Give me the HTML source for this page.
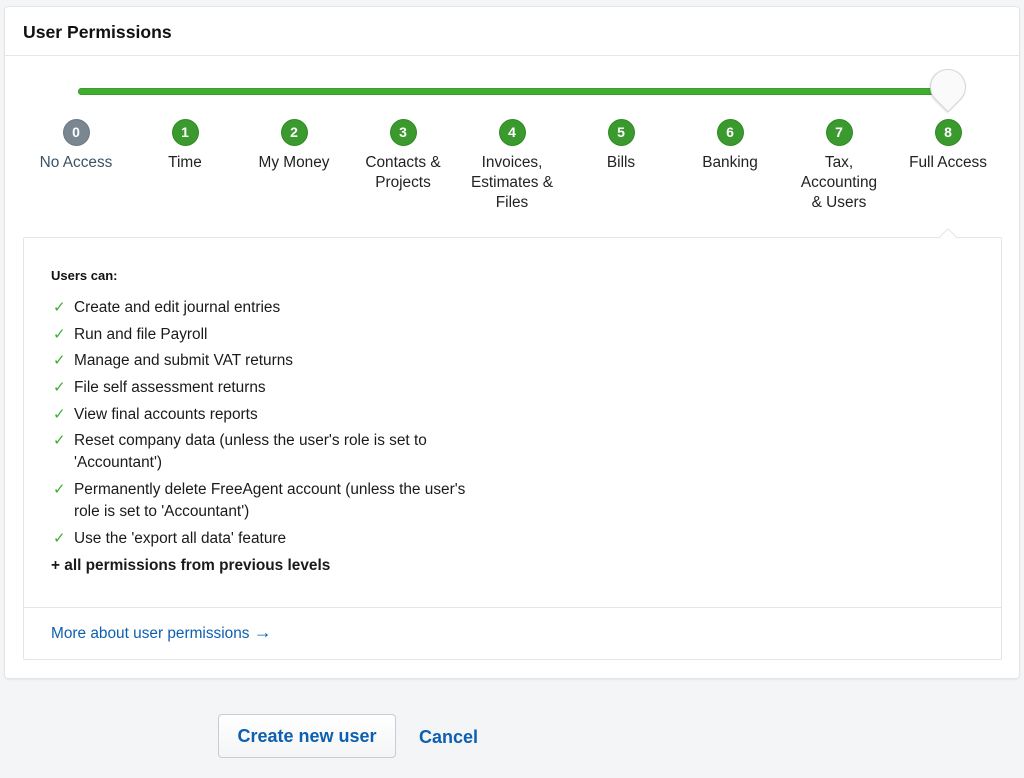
<!DOCTYPE html>
<html><head><meta charset="utf-8"><style>
*{box-sizing:border-box;margin:0;padding:0}
body{width:1024px;height:778px;background:#f4f5f7;font-family:"Liberation Sans",Arial,sans-serif;color:#1a1a1a;position:relative;overflow:hidden}
.card{position:absolute;left:5px;top:7px;width:1014px;height:671px;background:#fff;border-radius:3px;box-shadow:0 0 0 1px #e3e5e8,0 1px 2px rgba(0,0,0,.15)}
.hdr{position:absolute;left:0;top:0;width:100%;height:49px;border-bottom:1px solid #e6e7e9}
.hdr h1{position:absolute;left:18px;top:15px;font-size:17.6px;font-weight:bold;color:#111}
.track{position:absolute;left:73px;top:81px;width:872px;height:7px;border-radius:4px;background:#3fae2f;box-shadow:inset 0 0 0 1px #38a02a}
.knob{position:absolute;left:925px;top:62px;width:36px;height:36px;border-radius:50% 50% 0 50%;transform:rotate(45deg);background:#fafafa;border:1px solid #d3d5d8;box-shadow:0 1px 2px rgba(0,0,0,.12)}
.step{position:absolute;top:113px;width:110px;text-align:center;font-size:15.4px;line-height:20px;color:#222}
.step .n{display:block;margin:0 auto 8px;width:25px;height:25px;border-radius:50%;background:#3a9a2d;color:#fff;font-weight:bold;font-size:14px;line-height:25px;box-shadow:0 0 0 1px #2f8a24}
.step.z .n{background:#7a8791;box-shadow:0 0 0 1px #6c7882}
.step.z{color:#3c5366}
.box{position:absolute;left:18px;top:230px;width:979px;height:423px;border:1px solid #e3e5e8;border-radius:2px;background:#fff}
.ptr{position:absolute;left:936px;top:224px;width:14px;height:14px;background:#fff;border-left:1px solid #e3e5e8;border-top:1px solid #e3e5e8;transform:rotate(45deg)}
.uc{position:absolute;left:27px;top:30px;font-size:13px;font-weight:bold;color:#111}
ul{position:absolute;left:27px;top:59px;list-style:none;font-size:15.4px;line-height:22px}
li{position:relative;padding-left:23px;margin-bottom:4.7px}
li:before{content:"✓";position:absolute;left:2px;top:0;color:#3fae2f;font-size:15px}
.plus{font-weight:bold;padding-left:0}
.plus:before{content:none}
.foot{position:absolute;left:0;top:369px;width:100%;border-top:1px solid #e3e5e8}
.foot a{position:absolute;left:27px;top:17px;font-size:15.4px;color:#0d5fb0;text-decoration:none}
.foot a span{font-size:18px;line-height:15px}
.btn{position:absolute;left:218px;top:714px;width:178px;height:44px;border:1px solid #c9ccd0;border-radius:4px;background:linear-gradient(#fff,#f4f5f6);font-size:18px;font-weight:bold;color:#0d5fb0;text-align:center;line-height:43px}
.cancel{position:absolute;left:419px;top:727px;font-size:18px;font-weight:bold;color:#0d5fb0}
</style></head><body>
<div class="card">
<div class="hdr"><h1>User Permissions</h1></div>
<div class="track"></div>
<div class="knob"></div>
<div class="step z" style="left:16px"><span class="n">0</span>No Access</div>
<div class="step" style="left:125px"><span class="n">1</span>Time</div>
<div class="step" style="left:234px"><span class="n">2</span>My Money</div>
<div class="step" style="left:343px"><span class="n">3</span>Contacts &amp;<br>Projects</div>
<div class="step" style="left:452px"><span class="n">4</span>Invoices,<br>Estimates &amp;<br>Files</div>
<div class="step" style="left:561px"><span class="n">5</span>Bills</div>
<div class="step" style="left:670px"><span class="n">6</span>Banking</div>
<div class="step" style="left:779px"><span class="n">7</span>Tax,<br>Accounting<br>&amp; Users</div>
<div class="step" style="left:888px"><span class="n">8</span>Full Access</div>
<div class="box">
<div class="uc">Users can:</div>
<ul>
<li>Create and edit journal entries</li>
<li>Run and file Payroll</li>
<li>Manage and submit VAT returns</li>
<li>File self assessment returns</li>
<li>View final accounts reports</li>
<li>Reset company data (unless the user's role is set to<br>'Accountant')</li>
<li>Permanently delete FreeAgent account (unless the user's<br>role is set to 'Accountant')</li>
<li>Use the 'export all data' feature</li>
<li class="plus">+ all permissions from previous levels</li>
</ul>
<div class="foot"><a>More about user permissions <span>→</span></a></div>
</div>
<div class="ptr"></div>
</div>
<div class="btn">Create new user</div>
<div class="cancel">Cancel</div>
</body></html>
